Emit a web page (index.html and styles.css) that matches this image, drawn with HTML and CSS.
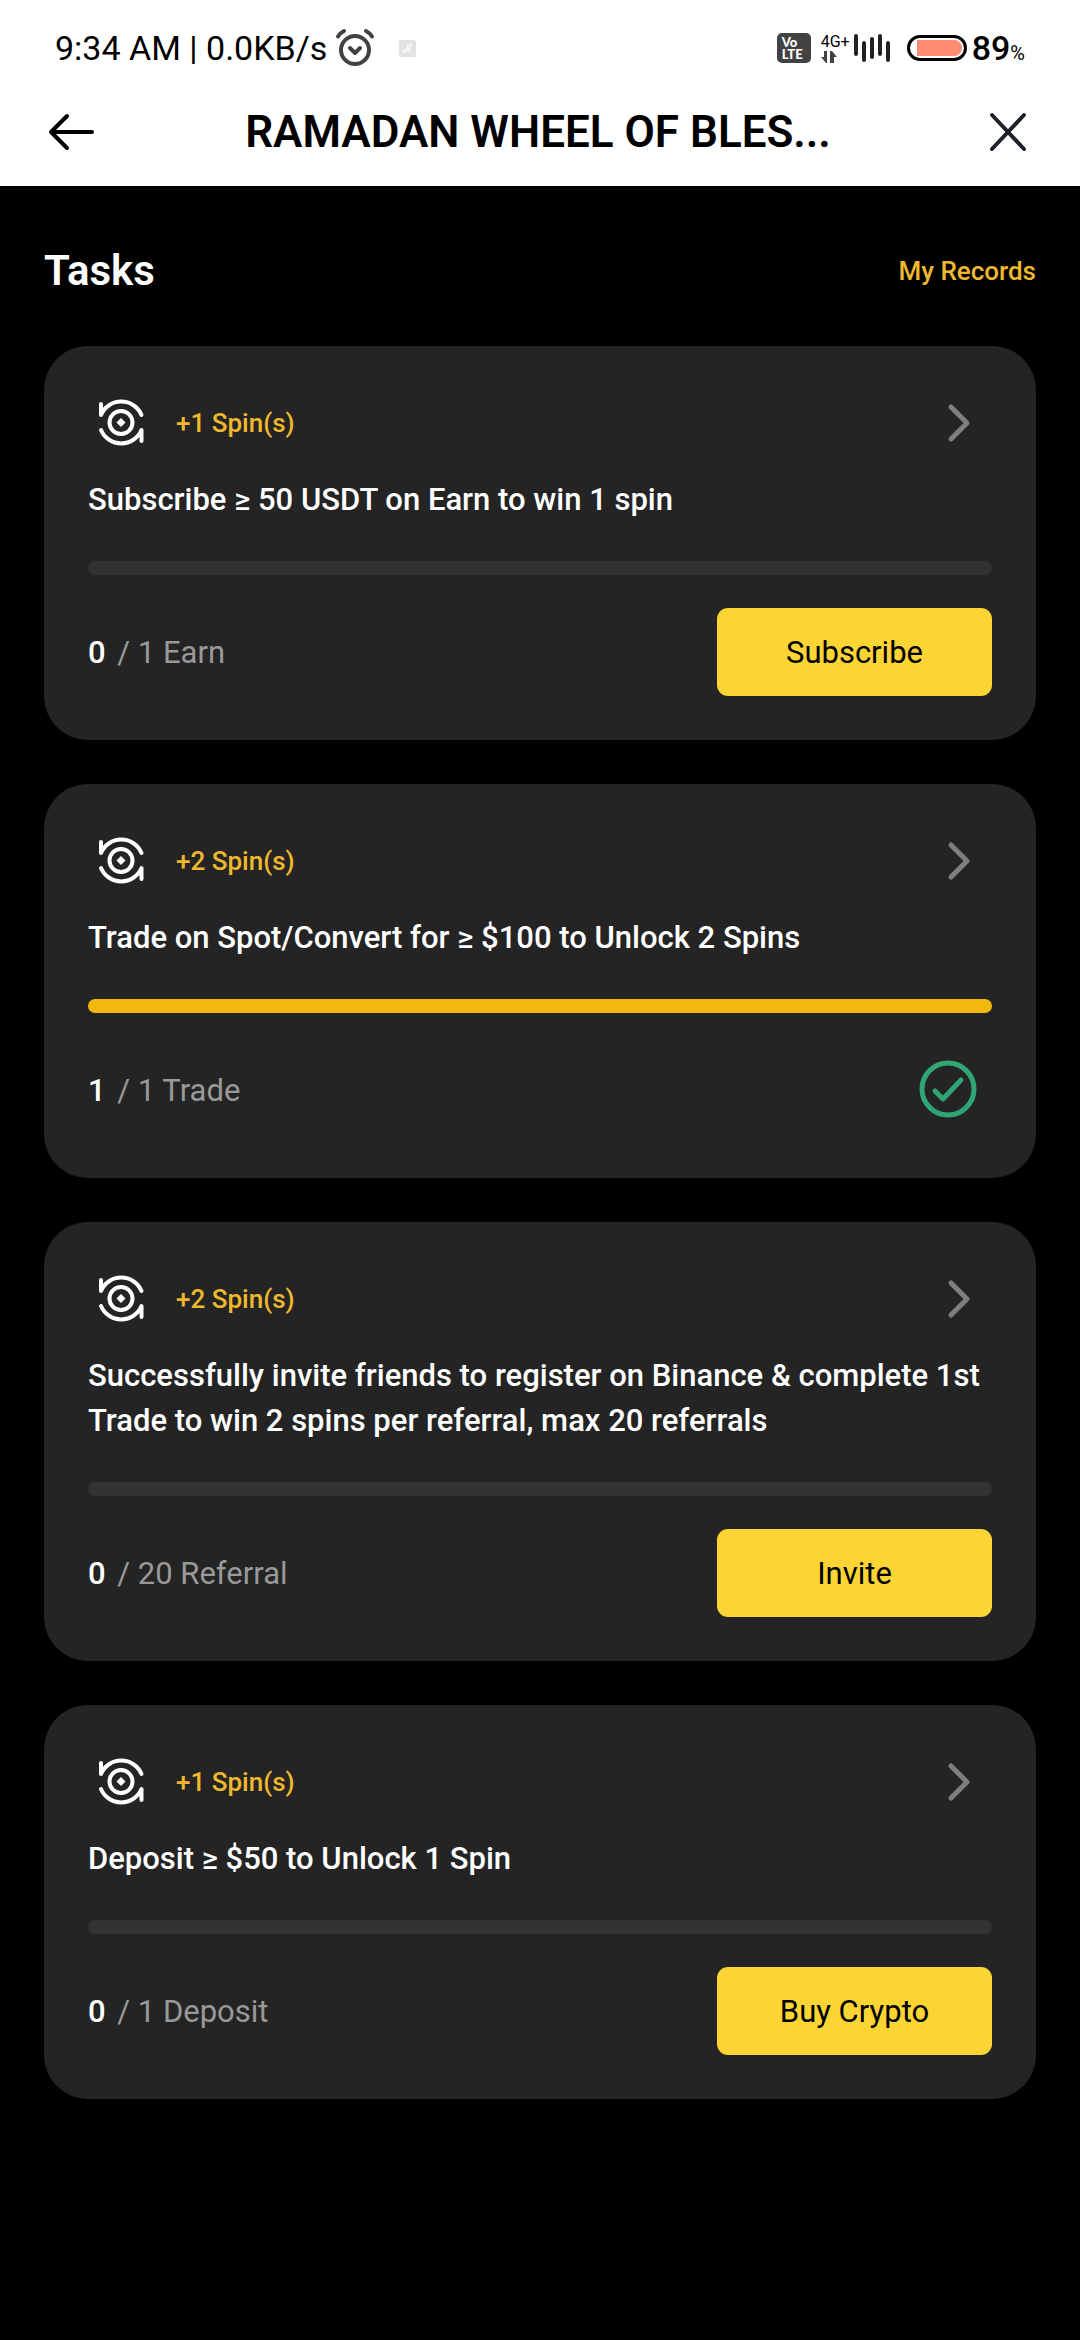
FILE: index.html
```html
<!DOCTYPE html>
<html lang="en">
<head>
<meta charset="utf-8">
<meta name="viewport" content="width=device-width, initial-scale=1">
<title>Ramadan Wheel of Blessings</title>
<link rel="stylesheet" href="styles.css">
</head>
<body>
<svg class="sprite" aria-hidden="true">
  <symbol id="spin" viewBox="0 0 66 66">
    <g fill="none" stroke="#fff" stroke-width="4" stroke-linecap="round" stroke-linejoin="round">
      <circle cx="33" cy="32.5" r="11.5"/>
      <path d="M13 14v11A22 22 0 0 1 53.500 25"/>
      <path d="M13 40A22 22 0 0 0 53.500 40v11"/>
    </g>
    <path d="M33 28l4.500 4.500-4.500 4.500-4.500-4.500z" fill="#fff"/>
  </symbol>
  <symbol id="chevron" viewBox="0 0 66 66">
    <path d="M25 17l16 16-16 16" fill="none" stroke="#7f7f7f" stroke-width="5" stroke-linecap="round" stroke-linejoin="round"/>
  </symbol>
</svg>

<header class="top">
  <div class="status">
    <span class="clock">9:34 AM | 0.0KB/s</span>
    <svg class="alarm" width="40" height="40" viewBox="0 0 40 40" fill="none" stroke="#424242" stroke-linecap="round" stroke-linejoin="round">
      <circle cx="20" cy="22" r="14" stroke-width="4"/>
      <path d="M15 20l5 5 5-5" stroke-width="4"/>
      <path d="M3 8.500Q5 5 9 3M31 3q4 2 6 5.500" stroke-width="4"/>
    </svg>
    <svg class="chip" width="17" height="17" viewBox="0 0 17 17">
      <rect width="17" height="17" rx="2" fill="#e2e2e2"/>
      <path d="M3 13l2-3 1 3 3-8v7M9 5l4-1M12 4l-2 9" fill="none" stroke="#fff"/>
    </svg>
    <span class="volte"><span>Vo</span><span>LTE</span></span>
    <span class="net">
      <span>4G+</span>
      <svg width="16" height="12" viewBox="0 0 16 12" fill="#424242"><path d="M0 6h3V0h3v12H5zM9 0h2l5 6h-3v6H9z"/></svg>
    </span>
    <svg class="signal" width="38" height="30" viewBox="0 0 38 30" stroke="#222" stroke-width="4" stroke-linecap="round">
      <path d="M3 3v18M11 10v17M19 6v18M27 3v18M35 10v17"/>
    </svg>
    <svg class="battery" width="60" height="26" viewBox="0 0 60 26">
      <rect x="1.500" y="1.500" width="57" height="23" rx="11.500" fill="#fff" stroke="#000" stroke-width="3"/>
      <path d="M10 5h37a8 8 0 0 1 0 16H10z" fill="#ff8c70"/>
    </svg>
    <span class="level">89<small>%</small></span>
  </div>
  <div class="bar">
    <button class="icon" type="button" aria-label="Back">
      <svg width="46" height="40" viewBox="0 0 46 40" fill="none" stroke="#000" stroke-width="4" stroke-linecap="round" stroke-linejoin="round"><path d="M44 20H3M19 4L3 20l16 16"/></svg>
    </button>
    <h1>RAMADAN WHEEL OF BLES...</h1>
    <button class="icon close" type="button" aria-label="Close">
      <svg width="40" height="40" viewBox="0 0 40 40" fill="none" stroke="#1e2329" stroke-width="4" stroke-linecap="round"><path d="M4 3l32 34M36 3L4 37"/></svg>
    </button>
  </div>
</header>

<main>
  <div class="heading">
    <h2>Tasks</h2>
    <a href="#records">My Records</a>
  </div>

  <section class="card">
    <div class="reward"><svg><use href="#spin"/></svg><span>+1 Spin(s)</span><a href="#earn" aria-label="Details"><svg><use href="#chevron"/></svg></a></div>
    <h3>Subscribe ≥ 50 USDT on Earn to win 1 spin</h3>
    <div class="track"></div>
    <div class="action"><p><b>0</b> / 1 Earn</p><button class="cta" type="button">Subscribe</button></div>
  </section>

  <section class="card">
    <div class="reward"><svg><use href="#spin"/></svg><span>+2 Spin(s)</span><a href="#trade" aria-label="Details"><svg><use href="#chevron"/></svg></a></div>
    <h3>Trade on Spot/Convert for ≥ $100 to Unlock 2 Spins</h3>
    <div class="track"><div class="fill"></div></div>
    <div class="action"><p><b>1</b> / 1 Trade</p>
      <svg class="done" viewBox="0 0 88 88" fill="none" stroke="#2fa574" stroke-linecap="round" stroke-linejoin="round" role="img" aria-label="Completed"><circle cx="44" cy="43" r="26" stroke-width="5"/><path d="M31 45l8 8 18-19" stroke-width="5"/></svg>
    </div>
  </section>

  <section class="card">
    <div class="reward"><svg><use href="#spin"/></svg><span>+2 Spin(s)</span><a href="#referral" aria-label="Details"><svg><use href="#chevron"/></svg></a></div>
    <h3>Successfully invite friends to register on Binance &amp; complete 1st Trade to win 2 spins per referral, max 20 referrals</h3>
    <div class="track"></div>
    <div class="action"><p><b>0</b> / 20 Referral</p><button class="cta" type="button">Invite</button></div>
  </section>

  <section class="card">
    <div class="reward"><svg><use href="#spin"/></svg><span>+1 Spin(s)</span><a href="#deposit" aria-label="Details"><svg><use href="#chevron"/></svg></a></div>
    <h3>Deposit ≥ $50 to Unlock 1 Spin</h3>
    <div class="track"></div>
    <div class="action"><p><b>0</b> / 1 Deposit</p><button class="cta" type="button">Buy Crypto</button></div>
  </section>
</main>
</body>
</html>
```

FILE: styles.css
```css
* { box-sizing: border-box; }

body {
  margin: 0;
  min-height: 100vh;
  background: #000;
  color: #fff;
  font-family: Roboto, "Liberation Sans", sans-serif;
}

h1, h2, h3, p { margin: 0; }
svg { display: block; flex: none; }
button { border: 0; padding: 0; font-family: inherit; cursor: pointer; }
a { text-decoration: none; }
.sprite { width: 0; height: 0; position: absolute; }

.top { background: #fff; color: #000; }

/* Status bar */
.status {
  display: flex;
  align-items: center;
  height: 96px;
  padding: 0 55px;
}
.clock { font-size: 34px; line-height: 40px; white-space: nowrap; }
.alarm { margin-left: 8px; }
.chip { margin-left: 24px; }
.volte {
  display: flex;
  flex-direction: column;
  justify-content: center;
  width: 34px;
  height: 30px;
  margin-left: auto;
  padding-left: 5px;
  border-radius: 5px;
  background: #424242;
  color: #fff;
  font: 900 13px/12px Lato, sans-serif;
}
.net {
  display: flex;
  flex-direction: column;
  width: 32px;
  margin-left: 10px;
  font-size: 16px;
  line-height: 18px;
}
.battery { margin-left: 16px; }
.level { margin-left: 5px; font-size: 34px; line-height: 40px; font-weight: 500; }
.level small { font-size: 20px; line-height: 20px; font-weight: 400; }

/* Title bar */
.bar {
  display: flex;
  align-items: center;
  height: 90px;
  padding: 0 52px 18px 48px;
}
.icon { display: flex; width: 46px; background: none; }
.close { justify-content: flex-end; }
.bar h1 {
  flex: 1;
  font-size: 44px;
  line-height: 52px;
  font-weight: 600;
  text-align: center;
  white-space: nowrap;
}

main { padding: 52px 44px; }

.heading {
  display: flex;
  align-items: center;
  justify-content: space-between;
  height: 66px;
  margin-bottom: 42px;
}
.heading h2 { font-size: 42px; line-height: 66px; font-weight: 600; }
.heading a, .reward span { color: #f0b92d; font-size: 26px; line-height: 34px; font-weight: 500; }

/* Task cards */
.card {
  padding: 44px;
  border-radius: 44px;
  background: #242424;
}
.card + .card { margin-top: 44px; }
.reward { display: flex; align-items: center; gap: 22px; }
.reward svg { width: 66px; height: 66px; }
.reward a { margin-left: auto; }
.card h3 { margin-top: 21px; font-size: 31px; line-height: 45px; font-weight: 500; }
.track {
  height: 14px;
  margin: 39px 0 33px;
  border-radius: 7px;
  background: #323232;
  overflow: hidden;
}
.fill { height: 100%; background: #f0b90b; }
.action { display: flex; align-items: center; justify-content: space-between; }
.action p { color: #999; font-size: 31px; line-height: 45px; }
.action b { margin-right: 4px; color: #fff; font-weight: 500; }
.cta {
  width: 275px;
  height: 88px;
  border-radius: 11px;
  background: #fcd535;
  color: #000;
  font-size: 31px;
}
.done { width: 88px; height: 88px; }
```
